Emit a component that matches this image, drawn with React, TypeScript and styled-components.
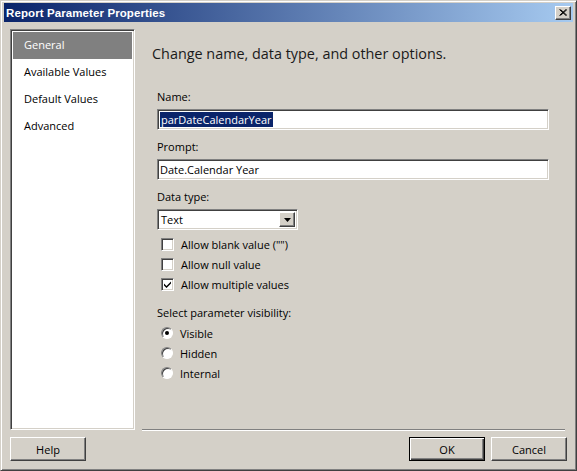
import * as React from "react";
import styled, { createGlobalStyle, css } from "styled-components";

const GlobalStyle = createGlobalStyle`
    html, body {
        margin: 0;
        padding: 0;
        background: #d4d0c8;
    }
    * {
        box-sizing: border-box;
    }
`;

const uiFont = `"Open Sans", "Noto Sans", sans-serif`;

const raised = css`
    border: 1px solid;
    border-color: #ffffff #404040 #404040 #ffffff;
    box-shadow: inset -1px -1px #808080, inset 1px 1px #d4d0c8;
    background: #d4d0c8;
`;

const sunken = css`
    border: 1px solid;
    border-color: #808080 #ffffff #ffffff #808080;
    box-shadow: inset 1px 1px #404040, inset -1px -1px #d4d0c8;
`;

const navItems = ["General", "Available Values", "Default Values", "Advanced"];

const checkboxes = [
    { label: 'Allow blank value ("")', checked: false },
    { label: "Allow null value", checked: false },
    { label: "Allow multiple values", checked: true },
];

const visibility = [
    { label: "Visible", checked: true },
    { label: "Hidden", checked: false },
    { label: "Internal", checked: false },
];

export default function App() {
    return (
        <>
            <GlobalStyle />
            <Window>
                <TitleBar>
                    <Title>Report Parameter Properties</Title>
                    <CloseButton aria-label="Close">
                        <svg width="8" height="7" viewBox="0 0 8 7">
                            <path d="M0.5 0.5 L7 6.5 M1.5 0.5 L8 6.5 M7 0.5 L0.5 6.5 M8 0.5 L1.5 6.5" stroke="#000" strokeWidth="1" />
                        </svg>
                    </CloseButton>
                </TitleBar>
                <Body>
                    <Sidebar>
                        {navItems.map((item, i) => (
                            <NavItem key={item} $selected={i === 0}>
                                {item}
                            </NavItem>
                        ))}
                    </Sidebar>
                    <Content>
                        <Heading>Change name, data type, and other options.</Heading>
                        <Form>
                            <Field>
                                <Label>Name:</Label>
                                <TextBox>
                                    <Selected>parDateCalendarYear</Selected>
                                </TextBox>
                            </Field>
                            <Field>
                                <Label>Prompt:</Label>
                                <TextBox>Date.Calendar Year</TextBox>
                            </Field>
                            <Field>
                                <Label>Data type:</Label>
                                <Select>
                                    <SelectValue>Text</SelectValue>
                                    <DropButton>
                                        <svg width="7" height="4" viewBox="0 0 7 4">
                                            <path d="M0 0 H7 L3.5 4 Z" fill="#000" />
                                        </svg>
                                    </DropButton>
                                </Select>
                            </Field>
                            <CheckList>
                                {checkboxes.map((c) => (
                                    <OptionRow key={c.label}>
                                        <CheckBox>
                                            {c.checked && (
                                                <svg width="9" height="9" viewBox="0 0 9 9">
                                                    <path d="M1 3.5 L3.5 6 L8 1.5 V3.5 L3.5 8 L1 5.5 Z" fill="#000" />
                                                </svg>
                                            )}
                                        </CheckBox>
                                        <OptionLabel>{c.label}</OptionLabel>
                                    </OptionRow>
                                ))}
                            </CheckList>
                            <Label>Select parameter visibility:</Label>
                            <RadioList>
                                {visibility.map((r) => (
                                    <OptionRow key={r.label}>
                                        <Radio $checked={r.checked} />
                                        <OptionLabel>{r.label}</OptionLabel>
                                    </OptionRow>
                                ))}
                            </RadioList>
                        </Form>
                    </Content>
                </Body>
                <Footer>
                    <Button>Help</Button>
                    <Spacer />
                    <Button $default>OK</Button>
                    <Button>Cancel</Button>
                </Footer>
            </Window>
        </>
    );
}

const Window = styled.div`
    width: 577px;
    height: 471px;
    display: flex;
    flex-direction: column;
    padding: 2px 3px 3px 3px;
    background: #d4d0c8;
    border: 1px solid;
    border-color: #d4d0c8 #404040 #404040 #d4d0c8;
    box-shadow: inset 1px 1px #ffffff, inset -1px -1px #808080;
    font-family: ${uiFont};
    font-size: 11px;
    color: #000;
`;

const TitleBar = styled.div`
    height: 19px;
    display: flex;
    align-items: center;
    padding: 0 2px 0 2px;
    background: linear-gradient(to right, #0a246a, #a6caf0);
`;

const Title = styled.div`
    flex: 1;
    font-family: "Liberation Sans", Arial, sans-serif;
    font-weight: bold;
    font-size: 11.5px;
    color: #ffffff;
    letter-spacing: 0.1px;
`;

const CloseButton = styled.div`
    ${raised};
    width: 16px;
    height: 14px;
    display: flex;
    align-items: center;
    justify-content: center;
`;

const Body = styled.div`
    height: 408px;
    display: flex;
    padding: 7px 8px 0 6px;
`;

const Sidebar = styled.div`
    ${sunken};
    width: 125px;
    height: 401px;
    padding: 2px;
    background: #ffffff;
    display: flex;
    flex-direction: column;
`;

const NavItem = styled.div<{ $selected?: boolean }>`
    height: 27px;
    display: flex;
    align-items: center;
    padding-left: 11px;
    padding-bottom: 2px;
    background: ${(p) => (p.$selected ? "#808080" : "transparent")};
    color: ${(p) => (p.$selected ? "#ffffff" : "#000000")};
`;

const Content = styled.div`
    flex: 1;
    margin-left: 7px;
    height: 401px;
    border-bottom: 1px solid #808080;
    box-shadow: 0 1px #ffffff;
    display: flex;
    flex-direction: column;
`;

const Heading = styled.div`
    margin: 14px 0 0 10px;
    height: 22px;
    line-height: 22px;
    font-size: 14.4px;
    color: #1a1a1a;
`;

const Form = styled.div`
    margin: 24px 0 0 15px;
    display: flex;
    flex-direction: column;
`;

const Field = styled.div`
    display: flex;
    flex-direction: column;
    margin-bottom: 9px;
`;

const Label = styled.div`
    height: 16px;
    line-height: 16px;
    margin-bottom: 4px;
`;

const TextBox = styled.div`
    ${sunken};
    width: 392px;
    height: 21px;
    background: #ffffff;
    display: flex;
    align-items: center;
    padding: 0 2px;
`;

const Selected = styled.span`
    background: #0a246a;
    color: #ffffff;
    line-height: 15px;
    padding: 0 1px;
`;

const Select = styled(TextBox)`
    width: 141px;
    padding-right: 2px;
`;

const SelectValue = styled.span`
    flex: 1;
    padding-left: 1px;
`;

const DropButton = styled.div`
    ${raised};
    width: 16px;
    height: 15px;
    display: flex;
    align-items: center;
    justify-content: center;
`;

const CheckList = styled.div`
    margin-top: -5px;
    margin-bottom: 11px;
    display: flex;
    flex-direction: column;
`;

const RadioList = styled.div`
    margin-top: -2px;
    display: flex;
    flex-direction: column;
`;

const OptionRow = styled.div`
    height: 20px;
    display: flex;
    align-items: center;
    padding-left: 4px;
`;

const CheckBox = styled.div`
    ${sunken};
    width: 13px;
    height: 13px;
    background: #ffffff;
    display: flex;
    align-items: center;
    justify-content: center;
`;

const Radio = styled.div<{ $checked?: boolean }>`
    width: 12px;
    height: 12px;
    border-radius: 50%;
    border: 1px solid;
    border-color: #808080 #ffffff #ffffff #808080;
    box-shadow: inset 1px 1px #404040;
    background: #ffffff;
    display: flex;
    align-items: center;
    justify-content: center;

    &::after {
        content: "";
        width: 4px;
        height: 4px;
        border-radius: 50%;
        background: ${(p) => (p.$checked ? "#000000" : "transparent")};
    }
`;

const OptionLabel = styled.span`
    margin-left: 7px;
`;

const Footer = styled.div`
    display: flex;
    align-items: flex-start;
    gap: 6px;
    padding: 7px 6px 0 6px;
`;

const Spacer = styled.div`
    flex: 1;
`;

const Button = styled.div<{ $default?: boolean }>`
    width: 76px;
    height: 24px;
    display: flex;
    align-items: center;
    justify-content: center;
    ${raised};
    ${(p) =>
        p.$default &&
        css`
            border: 1px solid #000000;
            box-shadow: inset 1px 1px #ffffff, inset -1px -1px #404040, inset -2px -2px #808080;
        `}
`;
